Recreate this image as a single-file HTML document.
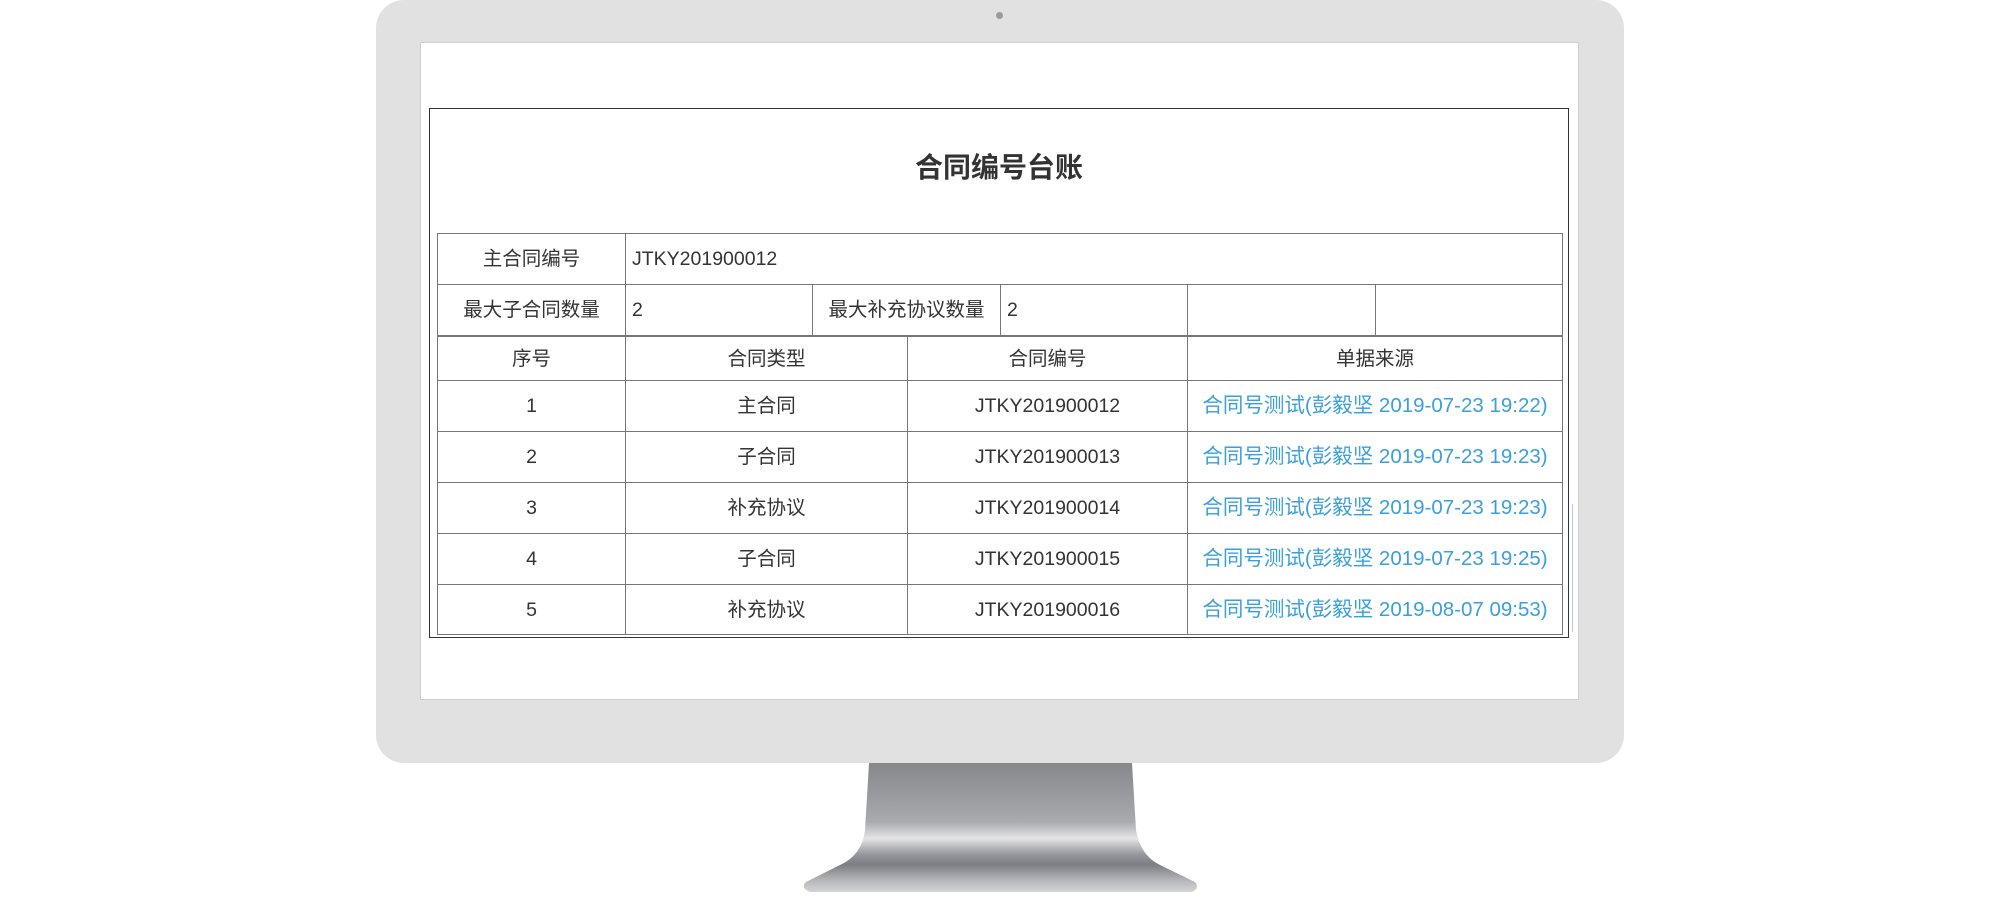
<!DOCTYPE html>
<html><head><meta charset="utf-8"><style>
body{margin:0;width:2000px;height:897px;background:#fff;position:relative;overflow:hidden;font-family:"Liberation Sans","Noto Sans CJK SC",sans-serif;}
.mon{position:absolute;left:376px;top:0px;width:1248px;height:763px;background:#e1e1e1;border-radius:28px;}
.cam{position:absolute;left:996px;top:12px;width:7px;height:7px;border-radius:50%;background:#9a9a9a;}
.scr{position:absolute;left:420px;top:42px;width:1157px;height:656px;background:#fff;border:1px solid #cfcfcf;}
.outer{position:absolute;left:429px;top:108px;width:1138px;height:528px;border:1.5px solid #333;}
.title{position:absolute;left:429px;top:150px;width:1140px;text-align:center;font-size:28px;font-weight:bold;color:#333;line-height:36px;}
table{position:absolute;border-collapse:collapse;left:437px;width:1125px;table-layout:fixed;font-size:19.5px;color:#333;}
td{border:1px solid #777;padding:0;line-height:24px;vertical-align:middle;}
td span{display:inline-block;line-height:24px;height:24px;vertical-align:top;}
.c{text-align:center}
.l{padding-left:6px}
.b{color:#3a9fdb;text-align:center;font-size:20.5px}
</style></head><body>
<div class="mon"></div>
<div class="cam"></div>
<div class="scr"></div>
<div class="outer"></div>
<div class="title">合同编号台账</div>
<table style="top:233px">
<colgroup><col style="width:188px"><col style="width:187px"><col style="width:188px"><col style="width:187px"><col style="width:188px"><col style="width:187px"></colgroup>
<tr style="height:51px"><td class="c"><span>主合同编号</span></td><td class="l" colspan="5"><span>JTKY201900012</span></td></tr>
<tr style="height:51px"><td class="c"><span>最大子合同数量</span></td><td class="l"><span>2</span></td><td class="c"><span>最大补充协议数量</span></td><td class="l"><span>2</span></td><td></td><td></td></tr>
</table>
<table style="top:336px">
<colgroup><col style="width:188px"><col style="width:282px"><col style="width:280px"><col style="width:375px"></colgroup>
<tr style="height:44px"><td class="c"><span>序号</span></td><td class="c"><span>合同类型</span></td><td class="c"><span>合同编号</span></td><td class="c"><span>单据来源</span></td></tr>
<tr style="height:51px"><td class="c"><span>1</span></td><td class="c"><span>主合同</span></td><td class="c"><span>JTKY201900012</span></td><td class="b"><span>合同号测试(彭毅坚 2019-07-23 19:22)</span></td></tr>
<tr style="height:51px"><td class="c"><span>2</span></td><td class="c"><span>子合同</span></td><td class="c"><span>JTKY201900013</span></td><td class="b"><span>合同号测试(彭毅坚 2019-07-23 19:23)</span></td></tr>
<tr style="height:51px"><td class="c"><span>3</span></td><td class="c"><span>补充协议</span></td><td class="c"><span>JTKY201900014</span></td><td class="b"><span>合同号测试(彭毅坚 2019-07-23 19:23)</span></td></tr>
<tr style="height:51px"><td class="c"><span>4</span></td><td class="c"><span>子合同</span></td><td class="c"><span>JTKY201900015</span></td><td class="b"><span>合同号测试(彭毅坚 2019-07-23 19:25)</span></td></tr>
<tr style="height:50px"><td class="c"><span>5</span></td><td class="c"><span>补充协议</span></td><td class="c"><span>JTKY201900016</span></td><td class="b"><span>合同号测试(彭毅坚 2019-08-07 09:53)</span></td></tr>
</table>
<div style="position:absolute;left:1572px;top:504px;width:1px;height:128px;background:#9fd8ea"></div>
<svg style="position:absolute;left:0;top:0" width="2000" height="897">
<defs><linearGradient id="g" x1="0" y1="763" x2="0" y2="893" gradientUnits="userSpaceOnUse">
<stop offset="0" stop-color="#86878b"/><stop offset="0.45" stop-color="#a9aaae"/><stop offset="0.58" stop-color="#e4e4e6"/><stop offset="0.7" stop-color="#98999d"/><stop offset="0.78" stop-color="#7c7d82"/><stop offset="0.9" stop-color="#b4b5b9"/><stop offset="1" stop-color="#d8d8da"/></linearGradient></defs>
<path d="M869 763 L1132 763 L1136 830 Q1140 855 1160 865 L1195 882 Q1200 888 1192 892 L810 892 Q800 888 806 882 L840 865 Q862 855 865 830 Z" fill="url(#g)"/>
</svg>
</body></html>
